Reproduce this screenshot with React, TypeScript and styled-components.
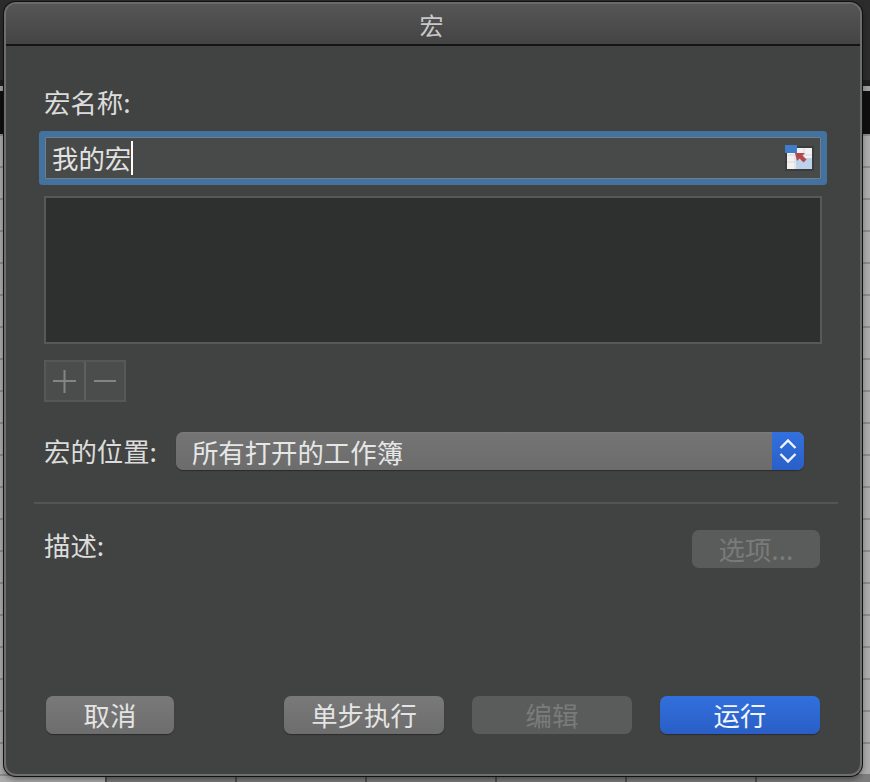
import React from "react";
import styled, { createGlobalStyle } from "styled-components";

const Global = createGlobalStyle`
  html, body { margin: 0; padding: 0; width: 870px; height: 782px; overflow: hidden; background: #2a2a2a; }
  * { box-sizing: border-box; }
`;

const Desktop = styled.div`
  width: 870px;
  height: 782px;
  padding: 2px 8px 6px 4px;
  font-family: "Noto Sans CJK SC", "Noto Sans", sans-serif;
  background:
    linear-gradient(#2c2c2c 0 80px, #1e1e1e 80px 86px, #a0a0a0 86px 91px, #0f0f0f 91px 134px, transparent 134px),
    repeating-linear-gradient(90deg, #4f4f4f 0 2px, #7c7c7c 2px 130px) 105px 774px / 100% 8px no-repeat,
    repeating-linear-gradient(#8a8a8a 0 2px, #ababab 2px 32px) 0 134px,
    #ababab;
`;

const Window = styled.div`
  position: relative;
  width: 858px;
  height: 774px;
  display: flex;
  flex-direction: column;
  background: #414342;
  border: 2px solid #6e6e6e;
  border-top-color: #6a6a6a;
  border-radius: 12px;
  box-shadow: 0 0 0 1px #111, 0 3px 6px rgba(0, 0, 0, 0.45);
  overflow: hidden;
  color: #dedede;
`;

const TitleBar = styled.div`
  height: 42px;
  flex: none;
  display: flex;
  align-items: center;
  justify-content: center;
  padding-right: 3px;
  font-size: 24px;
  color: #c8c8c8;
  background: linear-gradient(#565656, #444444);
  border-bottom: 2px solid #141414;
`;

const Body = styled.div`
  flex: 1;
  display: flex;
  flex-direction: column;
  padding: 0 38px 40px;
`;

const Label = styled.div`
  font-size: 26.4px;
  line-height: 30px;
  white-space: nowrap;
  color: #dcdcdc;
`;

const NameLabel = styled(Label)`
  margin-top: 41px;
`;

const NameField = styled.div`
  margin: 20px 1px 0;
  height: 42px;
  flex: none;
  display: flex;
  align-items: center;
  justify-content: space-between;
  padding: 0 6px 0 6px;
  background: #484a49;
  border: 1px solid #6a7f93;
  box-shadow: 0 0 0 6px #44729f;
  border-radius: 1px;
  font-size: 26.4px;
  color: #e2e2e2;
`;

const Caret = styled.span`
  display: inline-block;
  width: 2px;
  height: 34px;
  background: #fff;
  vertical-align: middle;
`;

const NameText = styled.span`
  display: flex;
  align-items: center;
  line-height: 34px;
`;

const MacroList = styled.div`
  margin-top: 17px;
  height: 148px;
  flex: none;
  background: #2e302f;
  border: 2px solid #575958;
`;

const StepperGroup = styled.div`
  margin-top: 16px;
  width: 82px;
  height: 42px;
  flex: none;
  display: flex;
  background: #4b4d4c;
  border: 2px solid #565857;
`;

const StepperButton = styled.div<{ $divider?: boolean }>`
  flex: 1;
  display: flex;
  align-items: center;
  justify-content: center;
  border-right: ${(p) => (p.$divider ? "2px solid #5e605f" : "none")};
`;

const LocationRow = styled.div`
  margin-top: 30px;
  height: 38px;
  flex: none;
  display: flex;
  align-items: center;
  gap: 19px;
`;

const Select = styled.div`
  width: 628px;
  height: 38px;
  flex: none;
  display: flex;
  border-radius: 7px;
  overflow: hidden;
  box-shadow: 0 1px 1px rgba(0, 0, 0, 0.35);
  background: linear-gradient(#7b7c7b 0, #737473 2px, #6b6c6b);
`;

const SelectValue = styled.div`
  flex: 1;
  padding-left: 16px;
  font-size: 26.4px;
  line-height: 39px;
  color: #e6e6e6;
`;

const SelectArrows = styled.div`
  width: 32px;
  display: flex;
  align-items: center;
  justify-content: center;
  background: linear-gradient(#3271de, #2a5fc8);
`;

const Divider = styled.div`
  margin: 32px -16px 0 -10px;
  height: 2px;
  flex: none;
  background: #535554;
`;

const DescriptionRow = styled.div`
  margin-top: 26px;
  padding-right: 2px;
  display: flex;
  align-items: flex-start;
  justify-content: space-between;
`;

const Spacer = styled.div`
  flex: 1;
`;

const Footer = styled.div`
  display: flex;
  padding: 0 2px;
`;

const ActionButton = styled.div<{ $w: number; $kind?: "disabled" | "primary"; $gap?: number }>`
  width: ${(p) => p.$w}px;
  height: 38px;
  margin-left: ${(p) => p.$gap ?? 0}px;
  display: flex;
  align-items: center;
  justify-content: center;
  flex: none;
  border-radius: 7px;
  font-size: 26.4px;
  line-height: 38px;
  white-space: nowrap;
  color: ${(p) => (p.$kind === "disabled" ? "#797b7a" : p.$kind === "primary" ? "#f2f5fb" : "#e4e4e4")};
  background: ${(p) =>
    p.$kind === "disabled"
      ? "#5a5c5b"
      : p.$kind === "primary"
        ? "linear-gradient(#3270dd, #2a5ec6)"
        : "linear-gradient(#787978, #6c6d6c)"};
  box-shadow: ${(p) => (p.$kind === "disabled" ? "none" : "0 1px 1px rgba(0, 0, 0, 0.35)")};
`;

const RefIcon = () => (
  <svg width="29" height="26" viewBox="0 0 29 26">
    <rect x="0" y="1" width="29" height="25" fill="#3c3c3c" />
    <rect x="2" y="3" width="25" height="21" fill="#f1f1f1" />
    <path d="M2 10h25M2 17h25M10 3v21M19 3v21" stroke="#d9d9d9" strokeWidth="1" />
    <rect x="11" y="13" width="16" height="11" fill="#bcd2ea" />
    <rect x="0" y="0" width="12" height="8" fill="#3f7cc9" />
    <path d="M10 8h10l-2.5 2.5 4 4-3 3-4-4L12 16z" fill="#b5484c" />
  </svg>
);

const Plus = () => (
  <svg width="24" height="24" viewBox="0 0 24 24">
    <path d="M0 12h23M11.5 1v23" stroke="#838583" strokeWidth="2" fill="none" />
  </svg>
);

const Minus = () => (
  <svg width="24" height="24" viewBox="0 0 24 24">
    <path d="M1 12h22" stroke="#838583" strokeWidth="2" fill="none" />
  </svg>
);

const Arrows = () => (
  <svg width="18" height="28" viewBox="0 0 18 28">
    <path d="M1.5 11L9 3.5l7.5 7.5M1.5 17L9 24.5l7.5-7.5" stroke="#f0f4fc" strokeWidth="2.4" fill="none" />
  </svg>
);

export default function App() {
  return (
    <Desktop>
      <Global />
      <Window>
        <TitleBar>宏</TitleBar>
        <Body>
          <NameLabel>宏名称:</NameLabel>
          <NameField>
            <NameText>
              我的宏
              <Caret />
            </NameText>
            <RefIcon />
          </NameField>
          <MacroList />
          <StepperGroup>
            <StepperButton $divider>
              <Plus />
            </StepperButton>
            <StepperButton>
              <Minus />
            </StepperButton>
          </StepperGroup>
          <LocationRow>
            <Label>宏的位置:</Label>
            <Select>
              <SelectValue>所有打开的工作簿</SelectValue>
              <SelectArrows>
                <Arrows />
              </SelectArrows>
            </Select>
          </LocationRow>
          <Divider />
          <DescriptionRow>
            <Label>描述:</Label>
            <ActionButton $w={128} $kind="disabled">
              选项...
            </ActionButton>
          </DescriptionRow>
          <Spacer />
          <Footer>
            <ActionButton $w={128}>取消</ActionButton>
            <ActionButton $w={160} $gap={110}>
              单步执行
            </ActionButton>
            <ActionButton $w={160} $gap={28} $kind="disabled">
              编辑
            </ActionButton>
            <ActionButton $w={160} $gap={28} $kind="primary">
              运行
            </ActionButton>
          </Footer>
        </Body>
      </Window>
    </Desktop>
  );
}
